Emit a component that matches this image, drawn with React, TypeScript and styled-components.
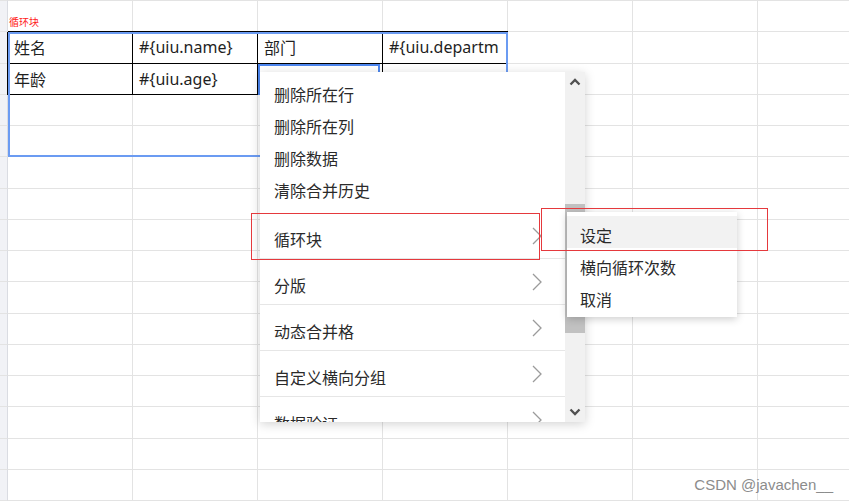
import styled, {createGlobalStyle} from "styled-components"

const GlobalStyle = createGlobalStyle`
  html, body {
    margin: 0;
    padding: 0;
    background: #fff;
  }
  body {
    font-family: "Noto Sans", "Noto Sans CJK SC", sans-serif;
  }
`

const ROWS = 17
const COLS = 8

const Sheet = styled.div`
  position: relative;
  width: 849px;
  height: 501px;
  overflow: hidden;
  display: grid;
  grid-template-columns: 8px repeat(7, 125px);
  grid-template-rows: 1px repeat(16, 31.25px);
  background: #fff;
`
const Cell = styled.div<{$r: number; $c: number; $table?: boolean; $top?: boolean; $left?: boolean}>`
  grid-row: ${p => p.$r + 1};
  grid-column: ${p => p.$c + 1};
  box-sizing: border-box;
  min-width: 0;
  display: flex;
  align-items: center;
  padding: 0 6px;
  overflow: hidden;
  white-space: nowrap;
  font-size: 16px;
  color: #1f1f1f;
  border-right: 1px solid ${p => p.$table ? '#000' : '#e3e3e3'};
  border-bottom: 1px solid ${p => p.$table ? '#000' : '#e3e3e3'};
  box-shadow: ${p => [p.$top && '0 -1px 0 #000', p.$left && '-1px 0 0 #000'].filter(Boolean).join(', ') || 'none'};
`
const HeaderCell = styled.div<{$r: number}>`
  grid-row: ${p => p.$r + 1};
  grid-column: 1;
  box-sizing: border-box;
  background: #f1f2f6;
  border-right: 1px solid #dadce2;
  border-bottom: 1px solid #e3e3e3;
`
const LabelCell = styled(Cell)`
  align-items: flex-end;
  padding: 0 0 4px 1px;
`
const BlockLabel = styled.span`
  font-size: 10px;
  line-height: 10px;
  color: #ff1a1a;
`
const LoopBlock = styled.div`
  grid-row: 3 / 7;
  grid-column: 2 / 6;
  border: 2px solid #6b9bf2;
  pointer-events: none;
`
const Selection = styled.div`
  grid-row: 4;
  grid-column: 4;
  margin-right: 3px;
  border: 2px solid #4c86ef;
  pointer-events: none;
`
const Menu = styled.div`
  position: absolute;
  left: 260px;
  top: 72px;
  width: 325px;
  height: 350px;
  display: flex;
  background: #fff;
  box-shadow: 0 2px 10px rgba(0, 0, 0, 0.18);
  z-index: 5;
`
const MenuList = styled.div`
  flex: 1;
  overflow: hidden;
  padding-top: 6px;
`
const MenuItem = styled.div<{$sub?: boolean}>`
  box-sizing: border-box;
  display: flex;
  align-items: center;
  justify-content: space-between;
  height: ${p => p.$sub ? '46px' : '32px'};
  padding: ${p => p.$sub ? '7px 23px 0 14px' : '0 23px 0 14px'};
  border-bottom: ${p => p.$sub ? '1px solid #e6e6e6' : 'none'};
  font-size: 16px;
  color: #2a2a2a;
  white-space: nowrap;
`
const MenuGap = styled.div`
  height: 7px;
`
const Arrow = styled.svg`
  margin-top: -7px;
  flex-shrink: 0;
`
const Scrollbar = styled.div`
  width: 20px;
  background: #f1f1f1;
  display: flex;
  flex-direction: column;
`
const ScrollArrow = styled.div`
  height: 20px;
  display: flex;
  align-items: center;
  justify-content: center;
`
const ScrollTrack = styled.div`
  flex: 1;
`
const ScrollThumb = styled.div`
  margin-top: 112px;
  height: 129px;
  background: #c1c1c1;
`
const SubMenu = styled.div`
  position: absolute;
  left: 567px;
  top: 212px;
  width: 170px;
  padding: 4px 0 5px;
  background: #fff;
  box-shadow: 0 2px 8px rgba(0, 0, 0, 0.2);
  z-index: 6;
`
const SubItem = styled.div<{$active?: boolean}>`
  box-sizing: border-box;
  height: 32px;
  padding: 5px 0 0 13px;
  display: flex;
  align-items: center;
  background: ${p => p.$active ? '#f2f2f2' : 'transparent'};
  font-size: 16px;
  color: #2a2a2a;
`
const Annotation = styled.div<{$x: number; $y: number; $w: number; $h: number}>`
  position: absolute;
  left: ${p => p.$x}px;
  top: ${p => p.$y}px;
  width: ${p => p.$w}px;
  height: ${p => p.$h}px;
  box-sizing: border-box;
  border: 1px solid #e5393d;
  pointer-events: none;
  z-index: 7;
`
const Watermark = styled.div`
  position: absolute;
  right: 16px;
  bottom: 8px;
  font-family: "Liberation Sans", Arial, sans-serif;
  font-size: 15px;
  color: #8c8c8c;
  text-shadow: 0 0 2px #fff;
  z-index: 8;
`

const tableText: Record<string, string> = {
  "2-1": "姓名",
  "2-2": "#{uiu.name}",
  "2-3": "部门",
  "2-4": "#{uiu.departm",
  "3-1": "年龄",
  "3-2": "#{uiu.age}",
  "3-3": "",
  "3-4": "",
}

const plainItems = ["删除所在行", "删除所在列", "删除数据", "清除合并历史"]
const subItems = ["循环块", "分版", "动态合并格", "自定义横向分组", "数据验证"]

function Chevron() {
  return <Arrow width="10" height="18" viewBox="0 0 10 18">
    <polyline points="1,1 9,9 1,17" fill="none" stroke="#9b9b9b" strokeWidth="1.3"/>
  </Arrow>
}

function ScrollIcon({down}: {down?: boolean}) {
  return <svg width="12" height="8" viewBox="0 0 12 8">
    <polyline points={down ? "1.5,1.5 6,6 10.5,1.5" : "1.5,6.5 6,2 10.5,6.5"} fill="none" stroke="#505050" strokeWidth="2.3"/>
  </svg>
}

export default function App() {
  const cells = []
  for (let r = 0; r < ROWS; r++) {
    cells.push(<HeaderCell key={`h${r}`} $r={r}/>)
    for (let c = 1; c < COLS; c++) {
      const key = `${r}-${c}`
      if (r === 1 && c === 1) {
        cells.push(<LabelCell key={key} $r={r} $c={c}><BlockLabel>循环块</BlockLabel></LabelCell>)
        continue
      }
      const isTable = key in tableText
      cells.push(
        <Cell key={key} $r={r} $c={c} $table={isTable} $top={isTable && r === 2} $left={isTable && c === 1}>
          {tableText[key]}
        </Cell>
      )
    }
  }

  return <>
    <GlobalStyle/>
    <Sheet>
      {cells}
      <LoopBlock/>
      <Selection/>

      <Menu>
        <MenuList>
          {plainItems.map(item => <MenuItem key={item}>{item}</MenuItem>)}
          <MenuGap/>
          {subItems.map(item =>
            <MenuItem key={item} $sub>
              <span>{item}</span>
              <Chevron/>
            </MenuItem>
          )}
        </MenuList>
        <Scrollbar>
          <ScrollArrow><ScrollIcon/></ScrollArrow>
          <ScrollTrack><ScrollThumb/></ScrollTrack>
          <ScrollArrow><ScrollIcon down/></ScrollArrow>
        </Scrollbar>
      </Menu>

      <SubMenu>
        <SubItem $active>设定</SubItem>
        <SubItem>横向循环次数</SubItem>
        <SubItem>取消</SubItem>
      </SubMenu>

      <Annotation $x={251} $y={213} $w={289} $h={47}/>
      <Annotation $x={541} $y={208} $w={227} $h={43}/>

      <Watermark>CSDN @javachen__</Watermark>
    </Sheet>
  </>
}
